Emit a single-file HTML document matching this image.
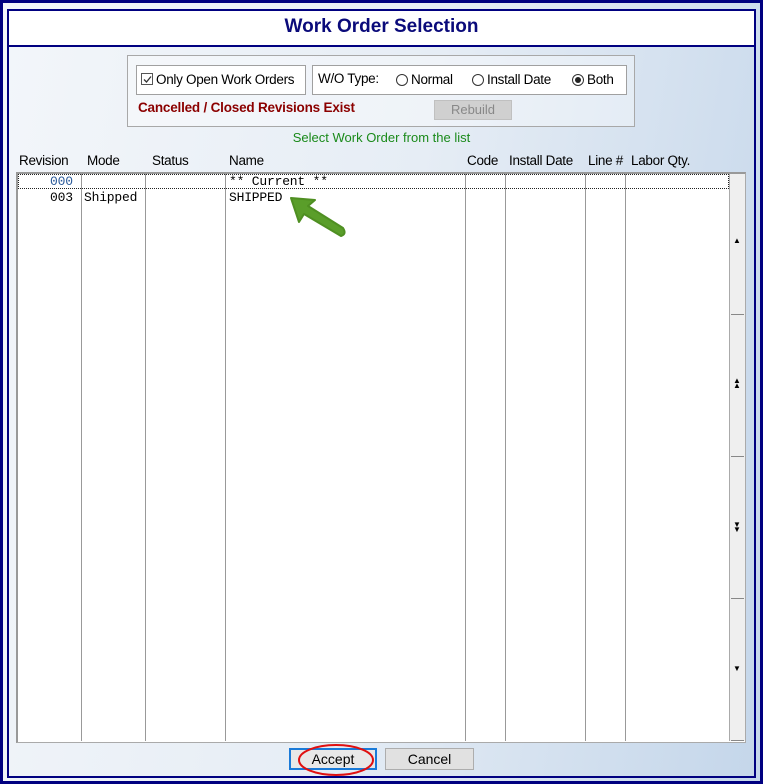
<!DOCTYPE html>
<html><head><style>
*{margin:0;padding:0;box-sizing:border-box}
body{width:763px;height:784px;position:relative;overflow:hidden;font-family:"Liberation Sans",Arial,sans-serif;font-size:13px;background:linear-gradient(100deg,#f3f6fa 0%,#e6edf5 50%,#c4d6ea 100%)}
.a{position:absolute}
.mono{font-family:"Liberation Mono","Courier New",monospace;font-size:13px;color:#000;letter-spacing:-0.2px}
.t{font-size:13.5px;letter-spacing:-0.3px}
</style></head><body>
<div class="a" style="left:0;top:0;width:763px;height:784px;border:3px solid #000080"></div>
<div class="a" style="left:7px;top:9px;width:749px;height:769px;border:2px solid #000080"></div>
<div class="a" style="left:9px;top:11px;width:745px;height:36px;background:#fff;border-bottom:2px solid #000080"></div>
<div class="a" style="left:9px;top:16px;width:745px;text-align:center;font-size:19px;font-weight:bold;color:#0a0a7a">Work Order Selection</div>

<div class="a" style="left:127px;top:55px;width:508px;height:72px;border:1px solid #a8a8a8;background:rgba(255,255,255,0.35)"></div>
<div class="a" style="left:136px;top:65px;width:170px;height:30px;border:1px solid #a0a0a0;background:#fff"></div>
<div class="a" style="left:141px;top:73px;width:12px;height:12px;border:1px solid #555;background:#fff"></div>
<svg class="a" style="left:142px;top:74px" width="11" height="11"><path d="M2 5.5 L4.5 8 L9 2.5" stroke="#333" stroke-width="1.3" fill="none"/></svg>
<div class="a t" style="left:156px;top:72px">Only Open Work Orders</div>
<div class="a" style="left:312px;top:65px;width:315px;height:30px;border:1px solid #a0a0a0;background:#fff"></div>
<div class="a t" style="left:318px;top:71px">W/O Type:</div>
<div class="a" style="left:396px;top:74px;width:12px;height:12px;border:1px solid #333;border-radius:50%"></div>
<div class="a t" style="left:411px;top:72px">Normal</div>
<div class="a" style="left:472px;top:74px;width:12px;height:12px;border:1px solid #333;border-radius:50%"></div>
<div class="a t" style="left:487px;top:72px">Install Date</div>
<div class="a" style="left:572px;top:74px;width:12px;height:12px;border:1px solid #333;border-radius:50%"></div>
<div class="a" style="left:575px;top:77px;width:6px;height:6px;background:#222;border-radius:50%"></div>
<div class="a t" style="left:587px;top:72px">Both</div>
<div class="a" style="left:138px;top:100px;font-size:13.5px;font-weight:bold;color:#8b0000;letter-spacing:-0.2px">Cancelled / Closed Revisions Exist</div>
<div class="a" style="left:434px;top:100px;width:78px;height:20px;background:#d0d0d0;border:1px solid #c0c0c0;color:#888;text-align:center;line-height:18px;font-size:13px">Rebuild</div>
<div class="a" style="left:0;top:130px;width:763px;text-align:center;color:#1a8a1a;font-size:13px">Select Work Order from the list</div>

<div class="a t" style="top:153px;left:19px">Revision</div>
<div class="a t" style="top:153px;left:87px">Mode</div>
<div class="a t" style="top:153px;left:152px">Status</div>
<div class="a t" style="top:153px;left:229px">Name</div>
<div class="a t" style="top:153px;left:467px">Code</div>
<div class="a t" style="top:153px;left:509px">Install Date</div>
<div class="a t" style="top:153px;left:588px">Line #</div>
<div class="a t" style="top:153px;left:631px">Labor Qty.</div>

<div class="a" style="left:16px;top:172px;width:730px;height:571px;background:#fff;border:1px solid #aaa;border-top:2px solid #999;border-left:2px solid #999"></div>
<div class="a" style="left:18px;top:174px;width:711px;height:15px;border:1px dotted #222"></div>
<div class="a" style="left:81px;top:174px;width:1px;height:567px;background:#999"></div>
<div class="a" style="left:145px;top:174px;width:1px;height:567px;background:#999"></div>
<div class="a" style="left:225px;top:174px;width:1px;height:567px;background:#999"></div>
<div class="a" style="left:465px;top:174px;width:1px;height:567px;background:#999"></div>
<div class="a" style="left:505px;top:174px;width:1px;height:567px;background:#999"></div>
<div class="a" style="left:585px;top:174px;width:1px;height:567px;background:#999"></div>
<div class="a" style="left:625px;top:174px;width:1px;height:567px;background:#999"></div>
<div class="a" style="left:729px;top:174px;width:16px;height:567px;background:#efefef;border-left:1px solid #aaa"></div>
<div class="a" style="left:731px;top:314px;width:13px;height:1px;background:#888"></div>
<div class="a" style="left:731px;top:456px;width:13px;height:1px;background:#888"></div>
<div class="a" style="left:731px;top:598px;width:13px;height:1px;background:#888"></div>
<div class="a" style="left:731px;top:740px;width:13px;height:1px;background:#888"></div>
<div class="a" style="left:733px;top:236px;font-size:8px">▲</div>
<div class="a" style="left:733px;top:378px;font-size:8px;line-height:5px">▲<br>▲</div>
<div class="a" style="left:733px;top:522px;font-size:8px;line-height:5px">▼<br>▼</div>
<div class="a" style="left:733px;top:664px;font-size:8px">▼</div>

<div class="a mono" style="left:50px;top:174px;color:#2a5a9a">000</div>
<div class="a mono" style="left:229px;top:174px">** Current **</div>
<div class="a mono" style="left:50px;top:190px">003</div>
<div class="a mono" style="left:84px;top:190px">Shipped</div>
<div class="a mono" style="left:229px;top:190px">SHIPPED</div>
<svg class="a" style="left:285px;top:192px" width="70" height="50"><path d="M6 6 L30 8 L23 14 L58 36 Q62 42 56 44 L19 22 L14 30 Z" fill="#5a9e2a" stroke="#4f8f22" stroke-width="2" stroke-linejoin="round"/></svg>

<div class="a" style="left:289px;top:748px;width:88px;height:22px;border:2px solid #1a7ad8;background:#e8e8e8;text-align:center;line-height:18px;font-size:14px">Accept</div>
<div class="a" style="left:385px;top:748px;width:89px;height:22px;border:1px solid #adadad;background:#e1e1e1;text-align:center;line-height:20px;font-size:14px">Cancel</div>
<svg class="a" style="left:290px;top:740px" width="90" height="40"><ellipse cx="46" cy="20" rx="37" ry="15" fill="none" stroke="#e01010" stroke-width="2"/></svg>
</body></html>
